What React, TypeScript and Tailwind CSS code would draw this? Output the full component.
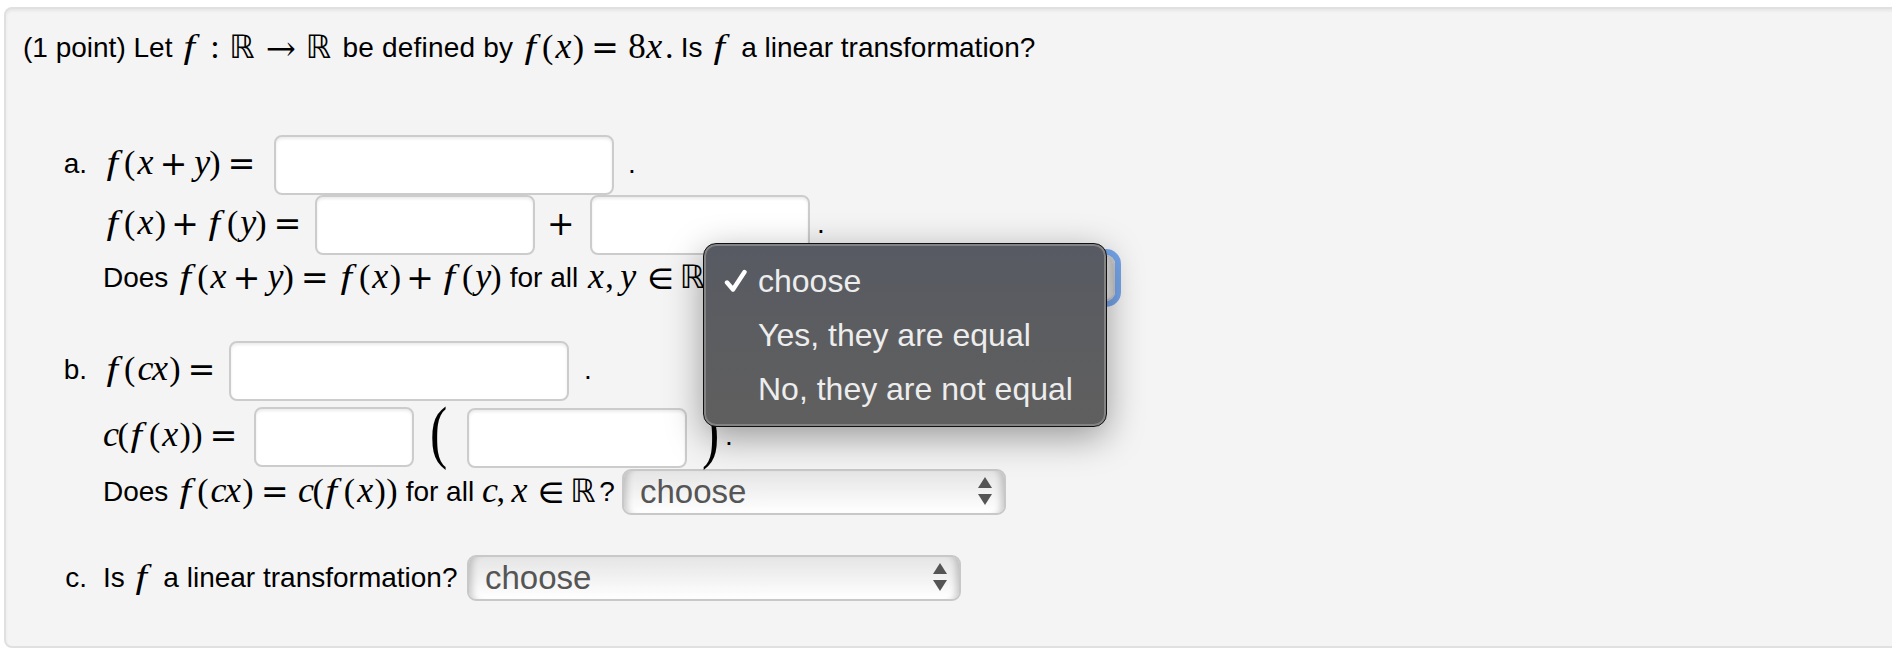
import React from 'react';

// advance and size of every symbol used in the formulas
const glyphs: Record<string, string> = {
  f: 'italic text-[33px] ml-[6.5px] w-[14.5px]',
  '(f': 'italic text-[33px] ml-[3.5px] w-[14.5px]',
  x: 'italic text-[36px] w-[17.3px]',
  y: 'italic text-[36px] w-[15px]',
  c: 'italic text-[36px] w-[14.5px]',
  '(': 'text-[34px] w-[13.4px]',
  ')': 'text-[34px] w-[11.7px]',
  '+': 'font-["DejaVu_Math_TeX_Gyre","DejaVu_Serif",serif] text-[33px] w-[27.7px] ml-[5.7px] mr-[6.2px]',
  '=': 'font-["DejaVu_Math_TeX_Gyre","DejaVu_Serif",serif] text-[33px] w-[27.7px] ml-[7.6px] mr-[8.6px]',
  '8': 'text-[35px] w-[18px]',
  '.': 'text-[34px] ml-[1.5px] w-[8px]',
  ',': 'text-[34px] w-[15px]',
  ':': 'text-[34px] w-[9px] ml-[9px] mr-[10px]',
  R: 'font-["DejaVu_Sans",sans-serif] text-[32px] w-[29px]',
  '→': 'font-["DejaVu_Math_TeX_Gyre","DejaVu_Serif",serif] text-[32px] w-[31px] ml-[7px] mr-[9.5px]',
  '∈': 'font-["DejaVu_Math_TeX_Gyre","DejaVu_Serif",serif] text-[33px] w-[22px] ml-[9px] mr-[10.5px]',
};

const M: React.FC<{ t: string }> = ({ t }) => (
  <span className="font-['Liberation_Serif',serif]">
    {t.split('').map((ch, i) => {
      const key = ch === 'f' && t[i - 1] === '(' ? '(f' : ch;
      return (
        <span key={i} className={`inline-block align-[-1px] leading-[0] ${glyphs[key] ?? ''}`}>
          {ch === 'f' ? (
            <span className="inline-block origin-left -translate-x-[3.5px] scale-x-[1.25]">f</span>
          ) : ch === 'R' ? 'ℝ' : ch}
        </span>
      );
    })}
  </span>
);

const Txt: React.FC<{ className?: string; children: React.ReactNode }> = ({ className = '', children }) => (
  <div className={`shrink-0 whitespace-pre leading-[36px] ${className}`}>{children}</div>
);

const Blank: React.FC<{ className: string }> = ({ className }) => (
  <input
    type="text"
    className={`h-[60px] shrink-0 rounded-lg border-2 border-[#ccc] bg-white px-3 shadow-[inset_0_2px_3px_rgba(0,0,0,0.08)] outline-none ${className}`}
  />
);

const Select: React.FC<{ className: string }> = ({ className }) => (
  <button
    className={`flex h-[46px] shrink-0 items-center justify-between rounded-[9px] border-2 border-[#c8c8c8] bg-linear-to-b from-[#e5e5e5] to-white pr-[12px] pl-4 text-[33px] text-[#555] shadow-[inset_9px_0_7px_-6px_rgba(0,0,0,0.2),inset_-9px_0_7px_-6px_rgba(0,0,0,0.2)] ${className}`}
  >
    <span className="leading-[38px]">choose</span>
    <svg className="-mt-[2px]" width="14" height="28" viewBox="0 0 14 28" fill="#555">
      <path d="M7 0 14 11H0Z" />
      <path d="M7 28 0 17H14Z" />
    </svg>
  </button>
);

const BigParen: React.FC<{ children: string }> = ({ children }) => (
  <span className="inline-block origin-top-left scale-x-[0.74] font-['Liberation_Serif',serif] text-[70px] leading-[48px]">
    {children}
  </span>
);

const options = ['choose', 'Yes, they are equal', 'No, they are not equal'];

const Menu: React.FC = () => (
  <ul className="absolute -top-3 -left-7 z-10 h-[184px] w-[404px] rounded-[13px] border border-[#111] bg-linear-to-b from-[#575a63] via-[#5c5d60] to-[#5f5f5f] pt-[10px] shadow-[inset_0_0_0_2px_#838383,0_10px_36px_rgba(0,0,0,0.38)]">
    {options.map((o, i) => (
      <li key={o} className="flex h-[54px] items-center text-[32px] whitespace-pre text-[#ededed]">
        <span className="flex w-[54px] justify-end pr-[9px]">
          {i === 0 && (
            <svg width="26" height="24" viewBox="0 0 26 24" fill="none" stroke="#fff" strokeWidth="4.4" strokeLinecap="round" strokeLinejoin="round">
              <path d="M4 13.5 10 20.5 21.5 3" />
            </svg>
          )}
        </span>
        {o}
      </li>
    ))}
  </ul>
);

const Item: React.FC<{ label: string; className?: string; children: React.ReactNode }> = ({ label, className = '', children }) => (
  <li className={`flex ${className}`}>
    <Txt className="w-[83px] pr-4 text-right">{label}</Txt>
    <div className="flex flex-col">{children}</div>
  </li>
);

export default function App() {
  return (
    <div className="h-[648px] w-full overflow-hidden bg-white pt-[7px] pl-1 font-['Liberation_Sans',Arial,sans-serif] text-[28px] text-black">
      <div className="h-[641px] w-[1900px] rounded-lg border-2 border-[#e0e0e0] bg-[#f4f4f4] shadow-[inset_0_2px_3px_rgba(0,0,0,0.06)]">
        <Txt className="h-[56px] pt-[21px] pl-[17px]">
          (1 point) Let <M t="f:R→R" /> <span className="tracking-[0.2px]">be defined by</span> <M t="f(x)=8x." /> Is <M t="f" /> <span className="ml-[2px]">a linear transformation?</span>
        </Txt>

        <ol className="pt-[70px] pl-[14px]">
          <Item label="a." className="[&>div:first-child]:mt-[11px]">
            <div className="flex">
              <Txt className="w-[171px] pt-[11px]"><M t="f(x+y)=" /></Txt>
              <Blank className="w-[340px]" />
              <Txt className="pt-[11px] pl-[14px]">.</Txt>
            </div>
            <div className="flex">
              <Txt className="w-[212px] pt-[11px]"><M t="f(x)+f(y)=" /></Txt>
              <Blank className="w-[220px]" />
              <Txt className="w-[55px] pt-[11px] pl-[7px]"><M t="+" /></Txt>
              <Blank className="w-[220px]" />
              <Txt className="pt-[11px] pl-[7px]">.</Txt>
            </div>
            <div className="flex">
              <Txt className="w-[628px] pt-[5px]">
                Does <M t="f(x+y)=f(x)+f(y)" /> for all <span className="ml-[2px]"><M t="x,y" /></span><span className="ml-[3px]"><M t="∈R" /></span>?
              </Txt>
              <div className="relative">
                <div className="rounded-[9px] ring-6 ring-[#76a5ea]">
                  <Select className="w-[384px]" />
                </div>
                <Menu />
              </div>
            </div>
          </Item>

          <Item label="b." className="mt-10 [&>div:first-child]:mt-[11px]">
            <div className="flex">
              <Txt className="w-[126px] pt-[11px]"><M t="f(cx)=" /></Txt>
              <Blank className="w-[340px]" />
              <Txt className="pt-[11px] pl-[15px]">.</Txt>
            </div>
            <div className="mt-[7px] flex">
              <Txt className="w-[151px] pt-[10px]"><M t="c(f(x))=" /></Txt>
              <Blank className="-mt-px w-[160px]" />
              <Txt className="w-[53px] pl-[16px]"><BigParen>(</BigParen></Txt>
              <Blank className="w-[220px]" />
              <Txt className="w-[34px] pl-[15px]"><BigParen>)</BigParen></Txt>
              <Txt className="pt-[10px] pl-[4px]">.</Txt>
            </div>
            <div className="mt-px flex">
              <Txt className="w-[519px] pt-[5px]">
                Does <M t="f(cx)=c(f(x))" /> for all <M t="c,x∈R" />?
              </Txt>
              <Select className="w-[384px]" />
            </div>
          </Item>

          <Item label="c." className="mt-10 [&>div:first-child]:mt-[5px]">
            <div className="flex">
              <Txt className="w-[364px] pt-[5px]">Is <M t="f" /> <span className="ml-[2px]">a linear transformation?</span></Txt>
              <Select className="w-[494px]" />
            </div>
          </Item>
        </ol>
      </div>
    </div>
  );
}
